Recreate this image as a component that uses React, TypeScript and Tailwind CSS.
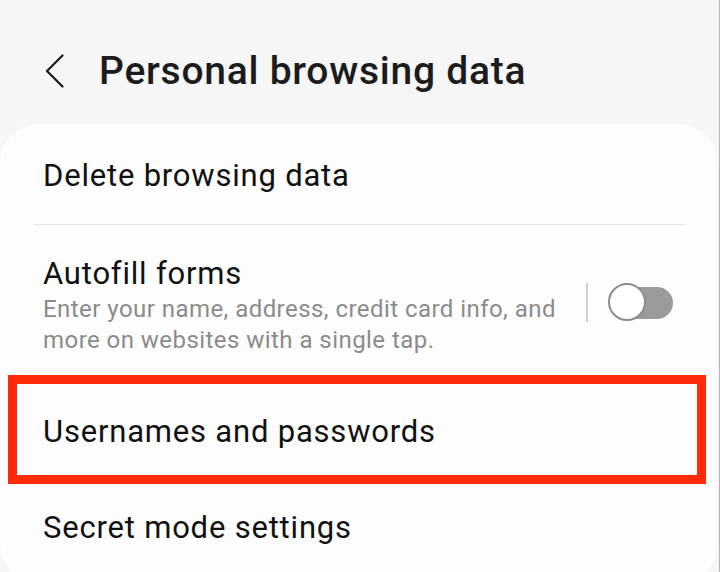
import React from "react";

export default function App() {
  return (
    <div
      className="flex h-[572px] w-[720px] overflow-hidden bg-[#f6f6f6] text-[#111111]"
      style={{ fontFamily: "Roboto, 'Noto Sans', sans-serif" }}
    >
      <div className="flex flex-1 flex-col">
        {/* Header */}
        <div className="flex h-[124px] shrink-0 items-start pt-[47px]">
          <div className="ml-[45px] flex h-[48px] w-[20px] items-center">
            <svg width="20" height="34" viewBox="0 0 20 34" fill="none">
              <polyline
                points="17.5,1.5 2,17 17.5,32.5"
                stroke="#1a1a1a"
                strokeWidth="2.2"
                strokeLinecap="round"
                strokeLinejoin="round"
              />
            </svg>
          </div>
          <h1 className="ml-[34px] text-[39px] leading-[48px] font-medium tracking-[0.75px] text-[#1c1c1c]">
            Personal browsing data
          </h1>
        </div>

        {/* Card */}
        <div className="flex h-[460px] w-[718px] shrink-0 flex-col rounded-[40px] bg-[#fdfdfd]">
          <div className="flex h-[100px] items-center pt-[4px] pl-[43px]">
            <span className="text-[31px] leading-[36px] tracking-[0.8px]">Delete browsing data</span>
          </div>
          <div className="mx-[34px] h-[1px] bg-[#e4e4e4]" />

          <div className="flex pt-[31px] pb-[19px] pl-[43px]">
            <div className="flex w-[530px] flex-col">
              <span className="text-[31px] leading-[36px] tracking-[0.8px]">Autofill forms</span>
              <span className="mt-[2px] text-[24px] leading-[31px] tracking-[0.45px] text-[#8b8b8b]">
                Enter your name, address, credit card info, and more on websites with a single tap.
              </span>
            </div>
            <div className="mb-[7px] ml-[13px] flex items-center self-center">
              <div className="h-[39px] w-[1.5px] bg-[#cfcfcf]" />
              <div className="relative ml-[20px] h-[39px] w-[65px]">
                <div className="absolute top-[3.5px] left-[14px] h-[32px] w-[51px] rounded-full bg-[#9b9b9b]" />
                <div className="absolute top-0 left-0 h-[38px] w-[38px] rounded-full border-2 border-[#8c8c8c] bg-white" />
              </div>
            </div>
          </div>

          <div className="mr-[12px] ml-[8px] flex h-[109px] items-center border-[9px] border-[#ff2a0a] pt-[5px] pl-[26px]">
            <span className="text-[31px] leading-[36px] tracking-[0.8px]">Usernames and passwords</span>
          </div>

          <div className="mt-[26px] pl-[43px]">
            <span className="text-[31px] leading-[36px] tracking-[0.8px]">Secret mode settings</span>
          </div>
        </div>
      </div>
      <div className="w-[1px] shrink-0 bg-[#b4b4b4]" />
    </div>
  );
}
